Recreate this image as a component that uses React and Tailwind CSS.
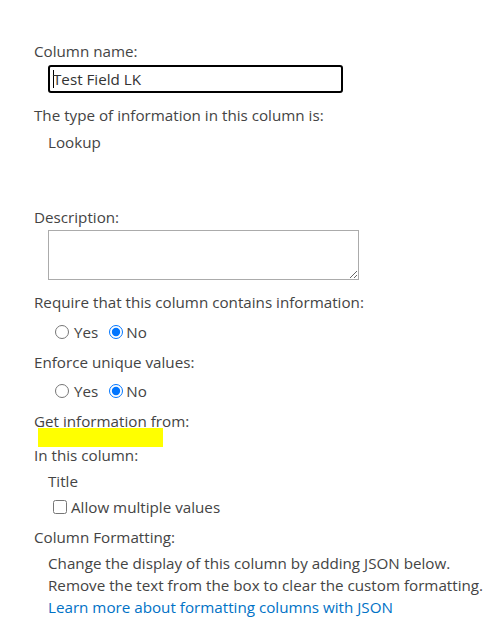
import React from 'react';

const font = { fontFamily: '"Open Sans", "Noto Sans", sans-serif' };

function Radio({ checked }) {
  return (
    <input
      type="radio"
      readOnly
      checked={checked}
      className="m-0 h-[14px] w-[14px] accent-[#0075ff]"
    />
  );
}

function YesNo({ name }) {
  return (
    <div className="flex h-[22px] items-center pl-[21px]">
      <label className="flex items-center gap-[5px]">
        <Radio checked={false} name={name} />
        <span>Yes</span>
      </label>
      <label className="ml-[11px] flex items-center gap-[3px]">
        <Radio checked name={name} />
        <span>No</span>
      </label>
    </div>
  );
}

export default function App() {
  return (
    <div
      className="min-h-[633px] w-[503px] bg-white pl-[34px] pt-[40px] text-[15.2px] leading-[22px] text-[#444444]"
      style={font}
    >
      <div>Column name:</div>
      <div className="ml-[14px] mt-[3px] flex h-[28px] w-[295px] items-center rounded-[3px] border-2 border-black pl-[3px] text-[#333]">
        <span className="mr-[-1px] h-[18px] w-px bg-black" />
        <span>Test Field LK</span>
      </div>

      <div className="mt-[11px]">The type of information in this column is:</div>
      <div className="mt-[5px] pl-[14px]">Lookup</div>

      <div className="mt-[53px]">Description:</div>
      <textarea
        readOnly
        className="ml-[14px] mt-[2px] block h-[50px] w-[311px] border border-[#ababab] bg-white"
      />

      <div className="mt-[11px]">Require that this column contains information:</div>
      <div className="mt-[8px]">
        <YesNo name="req" />
      </div>

      <div className="mt-[8px]">Enforce unique values:</div>
      <div className="mt-[7px]">
        <YesNo name="uniq" />
      </div>

      <div className="mt-[8px]">Get information from:</div>
      <div className="-mt-1 ml-[4px] h-[19px] w-[125px] bg-[#ffff00]" />
      <div className="mt-[-3px]">In this column:</div>
      <div className="mt-[4px] pl-[14px]">Title</div>
      <label className="mt-[4px] flex h-[22px] items-center gap-[4px] pl-[19px]">
        <input type="checkbox" readOnly className="m-0 h-[14px] w-[14px]" />
        <span>Allow multiple values</span>
      </label>

      <div className="mt-[8px]">Column Formatting:</div>
      <div className="mt-[4px] pl-[14px]">
        <div>Change the display of this column by adding JSON below.</div>
        <div>Remove the text from the box to clear the custom formatting.</div>
        <a href="#" className="text-[#0072c6]">
          Learn more about formatting columns with JSON
        </a>
      </div>
    </div>
  );
}
